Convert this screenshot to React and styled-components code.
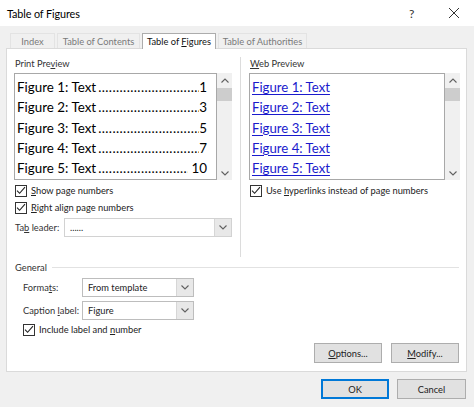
import React from 'react';
import styled, { createGlobalStyle } from 'styled-components';

const GlobalStyle = createGlobalStyle`
  html, body { margin: 0; padding: 0; }
  body {
    width: 474px;
    height: 407px;
    overflow: hidden;
    background: #f0f0f0;
    font-family: Lato, "Open Sans", sans-serif;
    font-size: 9.3px;
    color: #1e1e1e;
  }
`;

const Dialog = styled.div`
  width: 474px;
  height: 407px;
  display: flex;
  flex-direction: column;
  background: #f0f0f0;
`;

const TitleBar = styled.div`
  height: 26px;
  background: #fff;
  display: flex;
  align-items: center;
  padding-left: 7px;
  font-size: 10.8px;
  letter-spacing: -0.1px;
  color: #000;
  .title { flex: 1; }
  .help { width: 20px; font-size: 12px; color: #333; margin-right: 19px; }
  .close { width: 12px; height: 12px; margin-right: 14px; }
`;

const Body = styled.div`
  flex: 1;
  display: flex;
  flex-direction: column;
  padding: 7px 7px 0 6px;
`;

const TabStrip = styled.div`
  display: flex;
  align-items: flex-end;
  gap: 2px;
  padding-left: 4px;
  height: 15px;
`;

const Tab = styled.div`
  width: ${p => p.$width}px;
  height: ${p => (p.$active ? '16px' : '15px')};
  box-sizing: border-box;
  display: flex;
  align-items: center;
  justify-content: center;
  white-space: nowrap;
  background: ${p => (p.$active ? '#fff' : '#f0f0f0')};
  border: 1px solid ${p => (p.$active ? '#acacac' : '#e3e3e3')};
  border-bottom: none;
  color: ${p => (p.$active ? '#111' : '#7a7a7a')};
  font-size: 9.3px;
  margin-bottom: ${p => (p.$active ? '-1px' : '0')};
  position: relative;
  z-index: ${p => (p.$active ? 1 : 0)};
`;

const Panel = styled.div`
  background: #fff;
  border: 1px solid #dadada;
  height: 324px;
  box-sizing: border-box;
  padding: 8px 6px 0 7px;
  display: flex;
  flex-direction: column;
`;

const Columns = styled.div`
  display: grid;
  grid-template-columns: 218px 1px 211px;
  column-gap: 8px;
`;

const Divider = styled.div`
  width: 1px;
  height: 200px;
  background: #dcdcdc;
`;

const Column = styled.div`
  display: flex;
  flex-direction: column;
`;

const FieldLabel = styled.div`
  height: 14px;
  line-height: 14px;
  margin-bottom: 2px;
  padding-left: 1px;
  white-space: nowrap;
  color: #333;
`;

const U = styled.span`
  text-decoration: underline;
  text-underline-offset: 1px;
`;

const Preview = styled.div`
  display: flex;
  height: 107px;
`;

const PreviewList = styled.div`
  flex: 1;
  min-width: 0;
  border: 1px solid #a8a8a8;
  box-sizing: border-box;
  padding: 3px 9px 0 ${p => p.$left || 2}px;
  overflow: hidden;
`;

const Scrollbar = styled.div`
  width: 15px;
  background: #f0f0f0;
  display: flex;
  flex-direction: column;
  align-items: center;
  .thumb { width: 15px; height: 13px; background: #cdcdcd; margin-top: 1px; }
  .arrow { height: 14px; display: flex; align-items: center; justify-content: center; }
  .spacer { flex: 1; }
`;

const FigureRow = styled.div`
  display: flex;
  height: 20.3px;
  align-items: center;
  font-family: Lato, "Liberation Sans", sans-serif;
  font-size: 13.4px;
  color: #000;
  white-space: nowrap;
  .dots { flex: 1; min-width: 0; overflow: hidden; margin-left: 2px; letter-spacing: 0.4px; }
`;

const LinkRow = styled.a`
  display: block;
  height: 20.3px;
  line-height: 20.3px;
  font-family: Lato, "Liberation Sans", sans-serif;
  font-size: 13.2px;
  color: #1a1acc;
  text-decoration: underline;
  text-underline-offset: 2px;
  white-space: nowrap;
`;

const CheckRow = styled.label`
  display: flex;
  align-items: center;
  gap: 4px;
  height: 17px;
  padding-left: ${p => p.$indent || 1}px;
  color: #222;
  white-space: nowrap;
  margin-top: ${p => p.$top || 0}px;
`;

const Box = styled.span`
  width: 12px;
  height: 12px;
  flex: none;
  border: 1px solid #333;
  box-sizing: border-box;
  display: flex;
  align-items: center;
  justify-content: center;
  background: #fff;
`;

const ComboRow = styled.div`
  display: flex;
  align-items: center;
  margin-top: ${p => p.$top || 0}px;
  padding-left: ${p => p.$indent || 1}px;
  white-space: nowrap;
  .label { width: ${p => p.$labelWidth}px; color: #333; }
`;

const Combo = styled.div`
  width: ${p => p.$width}px;
  height: ${p => p.$height || 19}px;
  box-sizing: border-box;
  border: 1px solid ${p => (p.$light ? '#d2d2d2' : '#bdbdbd')};
  background: #fff;
  display: flex;
  .value { flex: 1; padding-left: 5px; display: flex; align-items: center; color: #222; }
  .btn {
    width: 16px;
    background: #e8e8e8;
    border-left: 1px solid #d6d6d6;
    display: flex;
    align-items: center;
    justify-content: center;
  }
`;

const General = styled.div`
  display: flex;
  align-items: center;
  margin-top: 3px;
  height: 14px;
  padding-left: 1px;
  color: #333;
  &::after {
    content: '';
    flex: 1;
    height: 1px;
    background: #e2e2e2;
    margin-left: 5px;
    margin-right: 1px;
  }
`;

const ButtonRow = styled.div`
  display: flex;
  justify-content: flex-end;
  gap: ${p => p.$gap || 9}px;
  margin-top: ${p => p.$top || 0}px;
  padding-right: ${p => p.$right || 0}px;
`;

const Button = styled.button`
  width: ${p => p.$width || 68}px;
  height: 20px;
  box-sizing: border-box;
  background: #e1e1e1;
  border: 1px solid ${p => (p.$default ? '#0078d7' : '#adadad')};
  box-shadow: ${p => (p.$default ? 'inset 0 0 0 1px #0078d7' : 'none')};
  font-family: Lato, "Open Sans", sans-serif;
  font-size: 9.3px;
  color: #222;
  padding: 0;
`;

const Footer = styled.div`
  flex: 1;
  padding-top: 7px;
`;

const Chevron = ({ up }) => (
  <svg width="8" height="5" viewBox="0 0 8 5">
    <path
      d={up ? 'M0.5 4.5 L4 1 L7.5 4.5' : 'M0.5 0.5 L4 4 L7.5 0.5'}
      fill="none"
      stroke="#606060"
      strokeWidth="1.1"
    />
  </svg>
);

const Check = () => (
  <svg width="10" height="9" viewBox="0 0 10 9">
    <path d="M1 4.6 L3.6 7.3 L9 1.2" fill="none" stroke="#222" strokeWidth="1.1" />
  </svg>
);

const CheckBox = ({ children, indent, top }) => (
  <CheckRow $indent={indent} $top={top}>
    <Box>
      <Check />
    </Box>
    <span>{children}</span>
  </CheckRow>
);

const Scroll = () => (
  <Scrollbar>
    <div className="arrow"><Chevron up /></div>
    <div className="thumb" />
    <div className="spacer" />
    <div className="arrow"><Chevron /></div>
  </Scrollbar>
);

const DOTS = '.'.repeat(60);

const figures = [
  { label: 'Figure 1: Text', page: '1' },
  { label: 'Figure 2: Text', page: '3' },
  { label: 'Figure 3: Text', page: '5' },
  { label: 'Figure 4: Text', page: '7' },
  { label: 'Figure 5: Text', page: '\u00a010' },
];

export default function App() {
  return (
    <>
      <GlobalStyle />
      <Dialog>
        <TitleBar>
          <span className="title">Table of Figures</span>
          <span className="help">?</span>
          <svg className="close" viewBox="0 0 12 12">
            <path d="M1 1 L11 11 M11 1 L1 11" stroke="#333" strokeWidth="1" />
          </svg>
        </TitleBar>
        <Body>
          <TabStrip>
            <Tab $width={45}><span>Index</span></Tab>
            <Tab $width={83}><span>Table of Contents</span></Tab>
            <Tab $width={74} $active><span>Table of <U>F</U>igures</span></Tab>
            <Tab $width={89}><span>Table of Authorities</span></Tab>
          </TabStrip>
          <Panel>
            <Columns>
              <Column>
                <FieldLabel>Print Pre<U>v</U>iew</FieldLabel>
                <Preview>
                  <PreviewList>
                    {figures.map(f => (
                      <FigureRow key={f.label}>
                        <span>{f.label}</span>
                        <span className="dots">{DOTS}</span>
                        <span>{f.page}</span>
                      </FigureRow>
                    ))}
                  </PreviewList>
                  <Scroll />
                </Preview>
                <CheckBox top={2}><U>S</U>how page numbers</CheckBox>
                <CheckBox><U>R</U>ight align page numbers</CheckBox>
                <ComboRow $top={2} $labelWidth={49}>
                  <span className="label">Ta<U>b</U> leader:</span>
                  <Combo $width={168} $light>
                    <div className="value">......</div>
                    <div className="btn"><Chevron /></div>
                  </Combo>
                </ComboRow>
              </Column>
              <Divider />
              <Column>
                <FieldLabel><U>W</U>eb Preview</FieldLabel>
                <Preview>
                  <PreviewList $left={2}>
                    {figures.map(f => (
                      <LinkRow key={f.label}>{f.label}</LinkRow>
                    ))}
                  </PreviewList>
                  <Scroll />
                </Preview>
                <CheckBox top={2}>Use <U>h</U>yperlinks instead of page numbers</CheckBox>
              </Column>
            </Columns>
            <General>General</General>
            <ComboRow $top={4} $indent={9} $labelWidth={59}>
              <span className="label">Forma<U>t</U>s:</span>
              <Combo $width={112}>
                <div className="value">From template</div>
                <div className="btn"><Chevron /></div>
              </Combo>
            </ComboRow>
            <ComboRow $top={4} $indent={9} $labelWidth={59}>
              <span className="label">Caption <U>l</U>abel:</span>
              <Combo $width={112}>
                <div className="value">Figure</div>
                <div className="btn"><Chevron /></div>
              </Combo>
            </ComboRow>
            <CheckBox indent={9} top={1}>Include label and <U>n</U>umber</CheckBox>
            <ButtonRow $top={5} $right={1}>
              <Button><U>O</U>ptions...</Button>
              <Button><U>M</U>odify...</Button>
            </ButtonRow>
          </Panel>
          <Footer>
            <ButtonRow $gap={8} $right={1}>
              <Button $default>OK</Button>
              <Button $width={69}>Cancel</Button>
            </ButtonRow>
          </Footer>
        </Body>
      </Dialog>
    </>
  );
}
